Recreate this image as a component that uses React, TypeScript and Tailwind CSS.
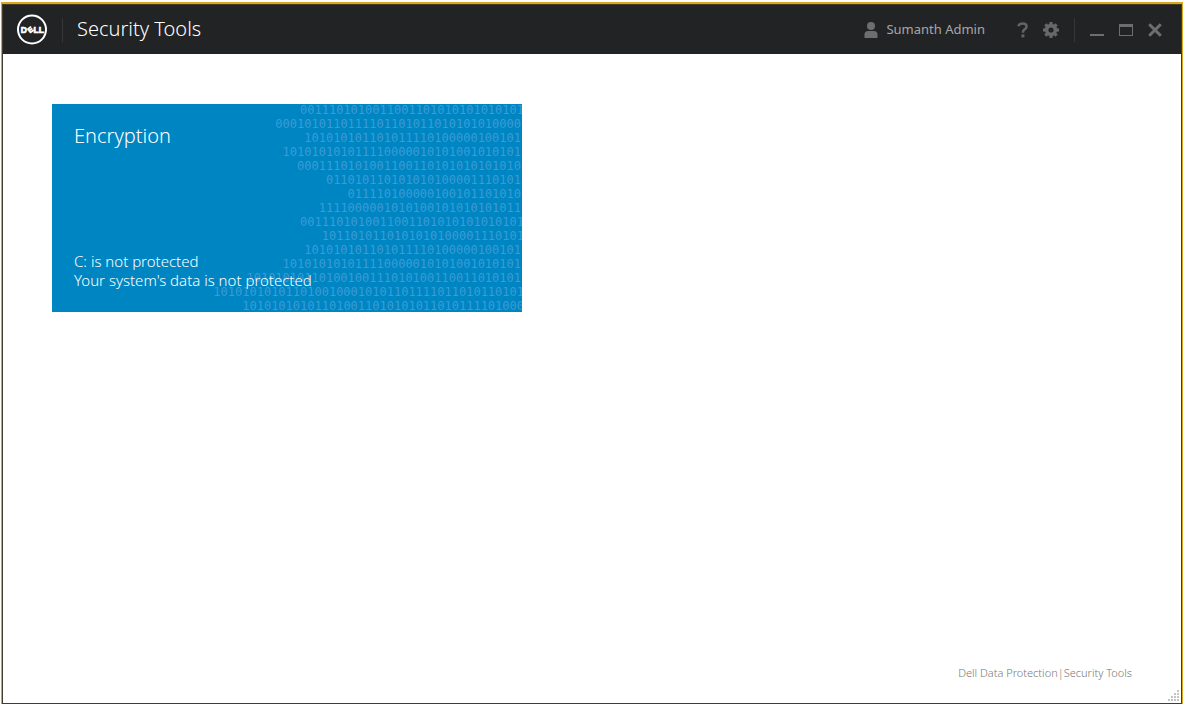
const binaryRows: { digits: string; bleed?: boolean }[] = [
  { digits: "0011101010011001101010101010101", bleed: true },
  { digits: "0001010110111101101011010101010000" },
  { digits: "101010101101011110100000100101" },
  { digits: "101010101011110000010101001010101" },
  { digits: "0001110101001100110101010101010" },
  { digits: "011010110101010100001110101" },
  { digits: "011110100000100101101010" },
  { digits: "1111000001010100101010101011" },
  { digits: "0011101010011001101010101010101", bleed: true },
  { digits: "1011010110101010100001110101", bleed: true },
  { digits: "101010101101011110100000100101" },
  { digits: "101010101011110000010101001010101" },
  { digits: "10101010110100100111010100110011010101" },
  { digits: "1010101010110100100010101101111011010110101", bleed: true },
  { digits: "101010101011010011010101011010111101000", bleed: true },
];

function DellLogo() {
  return (
    <svg width="32" height="32" viewBox="0 0 32 32" role="img" aria-label="Dell">
      <circle cx="16" cy="15.5" r="14" fill="none" stroke="#fff" strokeWidth="2" />
      <g
        fill="#fff"
        stroke="#fff"
        strokeWidth="0.7"
        fontFamily="'Liberation Sans', sans-serif"
        fontWeight="700"
        fontSize="8.5"
        textAnchor="middle"
      >
        <text x="7.8" y="18.6">D</text>
        <text x="14.4" y="18.4" fontSize="7.4" transform="rotate(-38 14.4 15.8)">E</text>
        <text x="20.2" y="18.6">L</text>
        <text x="25.4" y="18.6">L</text>
      </g>
    </svg>
  );
}

function UserIcon() {
  return (
    <svg width="14" height="16" viewBox="0 0 14 16" fill="#6d6e70" aria-hidden="true">
      <circle cx="7" cy="4" r="4" />
      <path d="M0.5 16V12.5Q0.5 9 4 9H10Q13.5 9 13.5 12.5V16Z" />
    </svg>
  );
}

function HelpIcon() {
  return (
    <svg width="12" height="16" viewBox="0 0 12 16" aria-hidden="true">
      <path
        d="M1.4 4.2Q2 1.5 5.6 1.5Q9.6 1.5 9.6 4.5Q9.6 6.3 7.6 7.4Q5.9 8.4 5.9 10.8"
        fill="none"
        stroke="#626365"
        strokeWidth="2.5"
      />
      <rect x="4.4" y="12.4" width="3" height="3" fill="#626365" />
    </svg>
  );
}

function GearIcon() {
  return (
    <svg width="16" height="16" viewBox="0 0 16 16" aria-hidden="true">
      <circle cx="8" cy="8" r="4.4" fill="none" stroke="#67686a" strokeWidth="3.6" />
      <g fill="#67686a">
        <rect x="6.4" y="0" width="3.2" height="3" />
        <rect x="6.4" y="13" width="3.2" height="3" />
        <rect x="0" y="6.4" width="3" height="3.2" />
        <rect x="13" y="6.4" width="3" height="3.2" />
        <g transform="rotate(45 8 8)">
          <rect x="6.4" y="0" width="3.2" height="3" />
          <rect x="6.4" y="13" width="3.2" height="3" />
          <rect x="0" y="6.4" width="3" height="3.2" />
          <rect x="13" y="6.4" width="3" height="3.2" />
        </g>
      </g>
    </svg>
  );
}

function MinimizeIcon() {
  return (
    <svg width="14" height="12" viewBox="0 0 14 12" aria-hidden="true">
      <rect y="10" width="14" height="2" fill="#6d6e70" />
    </svg>
  );
}

function MaximizeIcon() {
  return (
    <svg width="14" height="12" viewBox="0 0 14 12" aria-hidden="true">
      <path d="M0 0H14V12H0ZM1 3V11H13V3Z" fill="#6d6e70" fillRule="evenodd" />
    </svg>
  );
}

function CloseIcon() {
  return (
    <svg width="14" height="14" viewBox="0 0 14 14" aria-hidden="true">
      <path d="M1.2 1.2L12.8 12.8M12.8 1.2L1.2 12.8" stroke="#6d6e70" strokeWidth="3" />
    </svg>
  );
}

function ResizeGrip() {
  return (
    <svg width="11" height="11" viewBox="0 0 11 11" fill="#c4c4c4" aria-hidden="true">
      <rect x="9" y="0" width="2" height="2" />
      <rect x="6" y="3" width="2" height="2" />
      <rect x="9" y="3" width="2" height="2" />
      <rect x="3" y="6" width="2" height="2" />
      <rect x="6" y="6" width="2" height="2" />
      <rect x="9" y="6" width="2" height="2" />
      <rect x="0" y="9" width="2" height="2" />
      <rect x="3" y="9" width="2" height="2" />
      <rect x="6" y="9" width="2" height="2" />
      <rect x="9" y="9" width="2" height="2" />
    </svg>
  );
}

function TitleBar() {
  return (
    <header className="flex h-[49px] items-center justify-between bg-[#222324] pr-[19px] pl-[13px]">
      <div className="flex items-center">
        <DellLogo />
        <div className="ml-[14px] h-6 w-px bg-[#35383a]" />
        <h1 className="ml-[14px] pb-px font-['Noto_Sans',sans-serif] text-[20px] leading-6 font-light text-white">
          Security Tools
        </h1>
      </div>
      <div className="flex items-center">
        <button type="button" className="flex items-center gap-2">
          <UserIcon />
          <span className="pb-px font-['Noto_Sans',sans-serif] text-[13px] leading-5 text-[#a6a7a9]">
            Sumanth Admin
          </span>
        </button>
        <button type="button" aria-label="Help" className="ml-8">
          <HelpIcon />
        </button>
        <button type="button" aria-label="Settings" className="ml-[14px]">
          <GearIcon />
        </button>
        <div className="ml-[15px] h-6 w-px bg-[#35383a]" />
        <div className="ml-[15px] flex items-center gap-[15px]">
          <button type="button" aria-label="Minimize">
            <MinimizeIcon />
          </button>
          <button type="button" aria-label="Maximize">
            <MaximizeIcon />
          </button>
          <button type="button" aria-label="Close">
            <CloseIcon />
          </button>
        </div>
      </div>
    </header>
  );
}

function EncryptionTile() {
  return (
    <a
      href="#encryption"
      className="relative flex min-h-[208px] w-full max-w-[470px] flex-col justify-between overflow-hidden bg-[#0085c3] px-[22px] pt-5 pb-[22px] text-white"
    >
      <div
        aria-hidden="true"
        className="absolute inset-0 flex flex-col items-end justify-center pr-px font-['DejaVu_Sans_Mono',monospace] text-[12px] leading-[14px] text-[#3a9cd5]"
      >
        {binaryRows.map((row, index) => (
          <span key={index} className={row.bleed ? "-mr-[3px]" : ""}>
            {row.digits}
          </span>
        ))}
      </div>
      <h2 className="relative font-['Noto_Sans',sans-serif] text-[20px] leading-6 font-light">
        Encryption
      </h2>
      <p className="relative font-['Noto_Sans',sans-serif] text-[15px] leading-[19px] font-light">
        C: is not protected
        <br />
        Your system's data is not protected
      </p>
    </a>
  );
}

export default function App() {
  return (
    <div className="flex min-h-screen flex-col bg-white pt-[2px] pl-px">
      <div className="flex flex-1 flex-col border-t-2 border-r border-l border-[#dba81c]">
        <div className="flex flex-1 flex-col border border-[#453c2a]">
          <TitleBar />
          <main className="flex-1 px-[49px] pt-[50px]">
            <EncryptionTile />
          </main>
          <footer className="flex items-end justify-end">
            <p className="flex pb-[22px] font-['Noto_Sans',sans-serif] text-[11px] leading-4 font-light text-[#77787a]">
              <span>Dell Data Protection</span>
              <span>|</span>
              <span>Security Tools</span>
            </p>
            <div className="ml-9 pr-[2px] pb-[2px]">
              <ResizeGrip />
            </div>
          </footer>
        </div>
      </div>
    </div>
  );
}
